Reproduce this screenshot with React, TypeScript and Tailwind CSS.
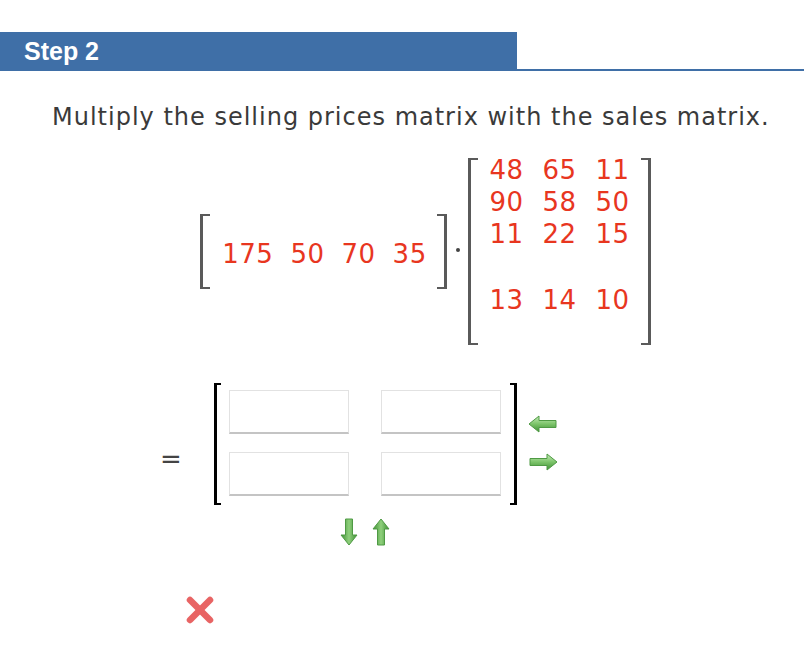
import React from "react";

const RED = "text-[#e8361f]";

function ArrowH({ dir }: { dir: "left" | "right" }) {
  const id = "g" + dir;
  return (
    <svg width="30" height="20" viewBox="0 0 30 20">
      <defs>
        <linearGradient id={id} x1="0" y1="0" x2="0" y2="1">
          <stop offset="0" stopColor="#c6ecb8" />
          <stop offset="0.5" stopColor="#7cc46a" />
          <stop offset="1" stopColor="#3f8f35" />
        </linearGradient>
      </defs>
      <g transform={dir === "right" ? "translate(30,0) scale(-1,1)" : undefined}>
        <path d="M1 10 L11 2 L11 6.5 L28 6.5 L28 13.5 L11 13.5 L11 18 Z" fill={`url(#${id})`} stroke="#4f9a44" strokeWidth="1" strokeLinejoin="round" />
      </g>
    </svg>
  );
}

function ArrowV({ dir }: { dir: "up" | "down" }) {
  const id = "v" + dir;
  return (
    <svg width="18" height="28" viewBox="0 0 18 28">
      <defs>
        <linearGradient id={id} x1="0" y1="0" x2="1" y2="0">
          <stop offset="0" stopColor="#3f8f35" />
          <stop offset="0.5" stopColor="#8fd07c" />
          <stop offset="1" stopColor="#3f8f35" />
        </linearGradient>
      </defs>
      <g transform={dir === "down" ? "translate(0,28) scale(1,-1)" : undefined}>
        <path d="M9 1 L17 11 L12.5 11 L12.5 27 L5.5 27 L5.5 11 L1 11 Z" fill={`url(#${id})`} stroke="#4f9a44" strokeWidth="1" strokeLinejoin="round" />
      </g>
    </svg>
  );
}

function InputBox() {
  return <div className="w-[120px] h-[44px] bg-white border border-[#e2e2e2] border-b-2 border-b-[#c4c4c4]" />;
}

export default function App() {
  const rows = [
    ["48", "65", "11"],
    ["90", "58", "50"],
    ["11", "22", "15"],
  ];
  return (
    <div className="w-[804px] h-[672px] bg-white relative overflow-hidden" style={{ fontFamily: '"DejaVu Sans", Verdana, sans-serif' }}>
      {/* header */}
      <div className="flex mt-[32px] h-[39px]">
        <div className="w-[517px] h-[39px] bg-[#3f6fa7] flex items-center pl-[24px]">
          <span className="text-white font-bold text-[25px] leading-none" style={{ fontFamily: '"Liberation Sans", Arial, sans-serif' }}>Step 2</span>
        </div>
        <div className="flex-1 flex flex-col justify-end">
          <div className="h-[2px] bg-[#3f6fa7]" />
        </div>
      </div>

      {/* sentence */}
      <div className="mt-[31px] pl-[52px] text-[24px] leading-[30px] tracking-[1px] text-[#3a3a3a]">
        Multiply the selling prices matrix with the sales matrix.
      </div>

      {/* product */}
      <div className={`flex items-center mt-[26px] pl-[200px] text-[26px] tracking-[0.5px] ${RED}`}>
        <div className="relative h-[75px] w-[247px] flex items-center justify-center pt-[5px]">
          <div className="absolute left-0 top-0 bottom-0 w-[10px] border-l-[3px] border-t-2 border-b-2 border-[#5a5a5a]" />
          <div className="absolute right-0 top-0 bottom-0 w-[10px] border-r-[3px] border-t-2 border-b-2 border-[#5a5a5a]" />
          <div className="flex gap-[17px] pl-[2px]">
            <span>175</span>
            <span>50</span>
            <span>70</span>
            <span>35</span>
          </div>
        </div>
        <div className="w-[21px] flex justify-center pb-[4px]">
          <div className="w-[4px] h-[4px] rounded-full bg-[#444]" />
        </div>
        <div className="relative h-[187px] w-[183px] pl-[12px]">
          <div className="absolute left-0 top-0 bottom-0 w-[10px] border-l-[3px] border-t-2 border-b-2 border-[#5a5a5a]" />
          <div className="absolute right-0 top-0 bottom-0 w-[10px] border-r-[3px] border-t-2 border-b-2 border-[#5a5a5a]" />
          <div className="flex flex-col">
            {rows.map((r, i) => (
              <div key={i} className={`flex h-[32px] items-center ${i === 0 ? "mt-[-4px]" : ""}`}>
                {r.map((c, j) => (
                  <div key={j} className="w-[53px] text-center">{c}</div>
                ))}
              </div>
            ))}
            <div className="h-[34px]" />
            <div className="flex h-[32px] items-center">
              {["13", "14", "10"].map((c, j) => (
                <div key={j} className="w-[53px] text-center">{c}</div>
              ))}
            </div>
          </div>
        </div>
      </div>

      {/* result */}
      <div className="flex mt-[38px] pl-[160px]">
        <div className="w-[54px] flex items-start pt-[63px] text-[26px] text-[#444] leading-none">=</div>
        <div className="relative h-[122px] w-[303px] flex flex-col gap-[18px] pt-[7px] pl-[15px]">
          <div className="absolute left-0 top-0 bottom-0 w-[7px] border-l-[3px] border-t-2 border-b-2 border-black" />
          <div className="absolute right-0 top-0 bottom-0 w-[7px] border-r-[3px] border-t-2 border-b-2 border-black" />
          <div className="flex gap-[32px]">
            <InputBox />
            <InputBox />
          </div>
          <div className="flex gap-[32px]">
            <InputBox />
            <InputBox />
          </div>
        </div>
        <div className="flex flex-col pl-[11px] pt-[31px] gap-[18px]">
          <ArrowH dir="left" />
          <ArrowH dir="right" />
        </div>
      </div>

      <div className="flex mt-[13px] pl-[340px] gap-[14px]">
        <ArrowV dir="down" />
        <ArrowV dir="up" />
      </div>

      {/* red X */}
      <div className="mt-[49px] pl-[185px]">
        <svg width="30" height="30" viewBox="0 0 30 30">
          <g stroke="#e65454" strokeWidth="6.5" strokeLinecap="round" opacity="0.9">
            <line x1="5" y1="5" x2="25" y2="25" />
            <line x1="25" y1="5" x2="5" y2="25" />
          </g>
        </svg>
      </div>
    </div>
  );
}
